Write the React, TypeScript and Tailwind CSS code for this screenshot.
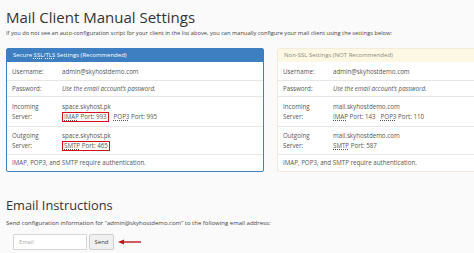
import React from "react";

const Abbr = ({ children }: { children: React.ReactNode }) => (
  <span className="underline decoration-dotted underline-offset-1">{children}</span>
);

function Panel({
  variant,
  server,
  inPort,
  inPop,
  outPort,
}: {
  variant: "ssl" | "non";
  server: string;
  inPort: string;
  inPop: string;
  outPort: string;
}) {
  const ssl = variant === "ssl";
  return (
    <div
      className={
        "w-[258px] shrink-0 bg-white border rounded-[2px] " +
        (ssl ? "border-[#3d7fc1]" : "border-[#f3ecdc]")
      }
    >
      <div
        className={
          "h-[13px] flex items-center px-[6px] text-[6px] " +
          (ssl ? "bg-[#3d7fc1] text-white" : "bg-[#fcf8e3] text-[#8d8a80]")
        }
      >
        {ssl ? (
          <span>
            Secure <Abbr>SSL</Abbr>/<Abbr>TLS</Abbr> Settings (Recommended)
          </span>
        ) : (
          <span>Non-SSL Settings (NOT Recommended)</span>
        )}
      </div>
      <div className="flex items-center h-[19px] pt-[1px] border-b border-[#e6e6e6] px-[5px] text-[6.2px] text-[#555]">
        <div className="w-[50px]">Username:</div>
        <div>admin@skyhostdemo.com</div>
      </div>
      <div className="flex items-center h-[16px] border-b border-[#e6e6e6] px-[5px] text-[6.2px] text-[#555]">
        <div className="w-[50px]">Password:</div>
        <div className="italic">Use the email account’s password.</div>
      </div>
      <div className="flex items-center h-[30px] border-b border-[#e6e6e6] px-[5px] text-[6.2px] text-[#555] leading-[10px]">
        <div className="w-[50px]">
          Incoming
          <br />
          Server:
        </div>
        <div>
          <div>{server}</div>
          <div className="flex items-center">
            {ssl ? (
              <span className="border border-[#d0101c] px-[1px] leading-[8px]">
                <Abbr>IMAP</Abbr> Port: {inPort}
              </span>
            ) : (
              <span>
                <Abbr>IMAP</Abbr> Port: {inPort}
              </span>
            )}
            <span className="ml-[5px]">
              <Abbr>POP3</Abbr> Port: {inPop}
            </span>
          </div>
        </div>
      </div>
      <div className="flex items-center h-[28px] border-b border-[#e6e6e6] px-[5px] text-[6.2px] text-[#555] leading-[10px]">
        <div className="w-[50px]">
          Outgoing
          <br />
          Server:
        </div>
        <div>
          <div>{server}</div>
          <div className="flex items-center">
            {ssl ? (
              <span className="border border-[#d0101c] px-[1px] leading-[8px]">
                <Abbr>SMTP</Abbr> Port: {outPort}
              </span>
            ) : (
              <span>
                <Abbr>SMTP</Abbr> Port: {outPort}
              </span>
            )}
          </div>
        </div>
      </div>
      <div className="flex items-center h-[16px] px-[5px] text-[6.2px] text-[#555]">
        IMAP, POP3, and SMTP require authentication.
      </div>
    </div>
  );
}

export default function App() {
  return (
    <div
      className="w-[474px] h-[253px] overflow-hidden bg-[#fafafa] text-[#333] pl-[6px]"
      style={{ fontFamily: '"Open Sans", "Liberation Sans", sans-serif' }}
    >
      <h1 className="pt-[7px] text-[15px] leading-[20px] text-[#333]">
        Mail Client Manual Settings
      </h1>
      <p className="mt-[2px] text-[5.7px] leading-[8px] text-[#444]">
        If you do not see an auto-configuration script for your client in the list above, you can
        manually configure your mail client using the settings below:
      </p>
      <div className="mt-[11px] flex gap-[13px] items-start">
        <Panel variant="ssl" server="space.skyhost.pk" inPort="993" inPop="995" outPort="465" />
        <Panel
          variant="non"
          server="mail.skyhostdemo.com"
          inPort="143"
          inPop="110"
          outPort="587"
        />
      </div>
      <h2 className="mt-[24px] text-[12.8px] leading-[18px] text-[#333]">Email Instructions</h2>
      <p className="mt-[5px] text-[6px] leading-[8px] text-[#444]">
        Send configuration information for “admin@skyhostdemo.com” to the following email address:
      </p>
      <div className="mt-[7px] ml-[7px] flex items-center">
        <div className="w-[74px] h-[16px] bg-white border border-[#d6d6d6] rounded-[1px] flex items-center px-[5px] text-[5.8px] text-[#aaa]">
          Email
        </div>
        <div className="ml-[2px] w-[25px] h-[16px] bg-[#f0f0f0] border border-[#cfcfcf] rounded-[2px] flex items-center justify-center text-[6px] text-[#444]">
          Send
        </div>
        <svg width="26" height="8" viewBox="0 0 26 8" className="ml-[3px]">
          <line x1="6" y1="4" x2="24" y2="4" stroke="#c0141c" strokeWidth="1.4" />
          <polygon points="1,4 7,1.5 7,6.5" fill="#c0141c" />
        </svg>
      </div>
    </div>
  );
}
